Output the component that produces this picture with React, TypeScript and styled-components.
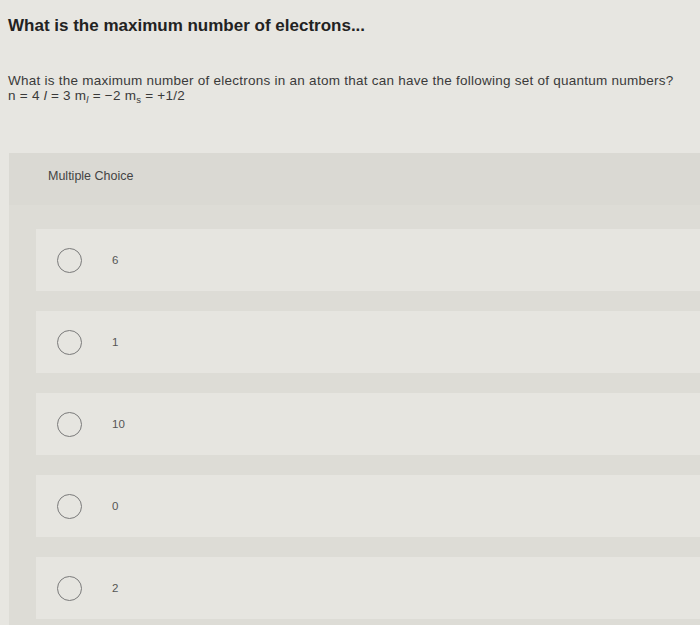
import React from 'react';
import styled, { createGlobalStyle } from 'styled-components';

const GlobalStyle = createGlobalStyle`
  html, body {
    margin: 0;
    padding: 0;
    background: #e7e6e1;
  }
  body {
    font-family: "Liberation Sans", Arial, sans-serif;
  }
`;

const Page = styled.div({
  width: '700px',
  height: '625px',
  overflow: 'hidden',
  backgroundColor: '#e7e6e1',
  display: 'flex',
  flexDirection: 'column',
});

const Title = styled.h1({
  margin: '16px 0 0 8px',
  fontSize: '17px',
  lineHeight: '20px',
  fontWeight: 700,
  color: '#222',
});

const Prompt = styled.div({
  margin: '37px 0 0 8px',
  fontSize: '13.5px',
  lineHeight: '15px',
  letterSpacing: '0.25px',
  color: '#3a3a3a',
});

const PromptLine = styled.div({
  height: '15px',
  whiteSpace: 'nowrap',
});

const Sub = styled.span({
  fontSize: '9.5px',
  position: 'relative',
  top: '3px',
});

const Panel = styled.section({
  margin: '50px 0 0 9px',
  backgroundColor: '#dddcd6',
  paddingBottom: '8px',
  display: 'flex',
  flexDirection: 'column',
});

const PanelHeader = styled.div({
  height: '52px',
  display: 'flex',
  alignItems: 'center',
  paddingLeft: '39px',
  paddingBottom: '6px',
  boxSizing: 'border-box',
  fontSize: '12.5px',
  color: '#444',
  backgroundColor: '#dad9d3',
});

const Options = styled.div({
  display: 'flex',
  flexDirection: 'column',
  gap: '20px',
  padding: '24px 0 0 27px',
});

const OptionRow = styled.label({
  height: '62px',
  display: 'flex',
  alignItems: 'center',
  paddingLeft: '21px',
  backgroundColor: '#e6e5e0',
  fontSize: '11.5px',
  color: '#555',
});

const Radio = styled.span({
  width: '23px',
  height: '23px',
  borderRadius: '50%',
  border: '1.5px solid #7a7a7a',
  marginRight: '30px',
  flexShrink: 0,
});

const choices = ['6', '1', '10', '0', '2'];

export default function App() {
  return (
    <Page>
      <GlobalStyle />
      <Title>What is the maximum number of electrons...</Title>
      <Prompt>
        <PromptLine>
          What is the maximum number of electrons in an atom that can have the following set of quantum numbers?
        </PromptLine>
        <PromptLine>
          n = 4 <i>l</i> = 3 m<Sub><i>l</i></Sub> = −2 m<Sub>s</Sub> = +1/2
        </PromptLine>
      </Prompt>
      <Panel>
        <PanelHeader>Multiple Choice</PanelHeader>
        <Options>
          {choices.map((c) => (
            <OptionRow key={c}>
              <Radio />
              {c}
            </OptionRow>
          ))}
        </Options>
      </Panel>
    </Page>
  );
}
